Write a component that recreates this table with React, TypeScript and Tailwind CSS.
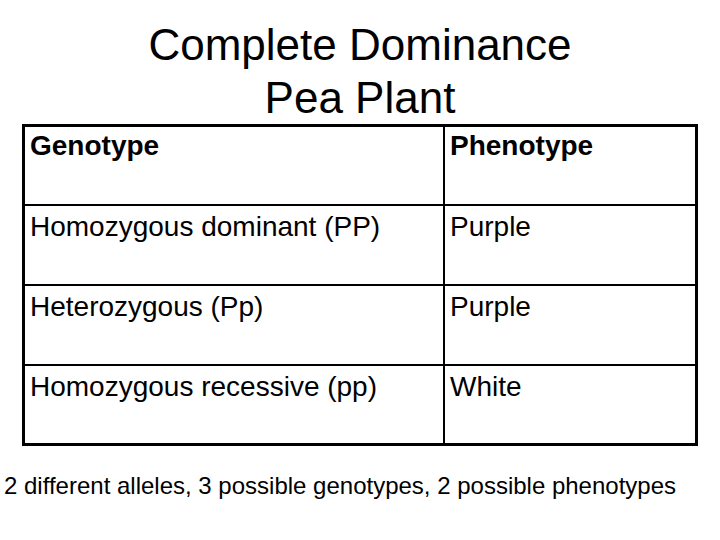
const rows = [
  { genotype: 'Homozygous dominant (PP)', phenotype: 'Purple', h: 'h-[80px] border-b-2' },
  { genotype: 'Heterozygous (Pp)', phenotype: 'Purple', h: 'h-[80px] border-b-2' },
  { genotype: 'Homozygous recessive (pp)', phenotype: 'White', h: 'h-[77px]' },
];

export default function App() {
  return (
    <div className="h-[540px] w-[720px] overflow-hidden bg-white font-['Liberation_Sans',Arial,sans-serif] text-black">
      <h1 className="pt-[18px] text-center text-[44px] leading-[53px] font-normal">
        Complete Dominance
        <br />
        Pea Plant
      </h1>

      <div className="mx-auto w-[676px] border-[3px] border-black">
        <div className="flex h-[79px] border-b-2 border-black text-[28px] font-bold leading-[31px]">
          <div className="w-[420px] border-r-2 border-black px-[5px] pt-[3px]">Genotype</div>
          <div className="flex-1 px-[5px] pt-[3px]">Phenotype</div>
        </div>
        {rows.map((row) => (
          <div key={row.genotype} className={`flex ${row.h} border-black text-[28px] leading-[31px]`}>
            <div className="w-[420px] border-r-2 border-black px-[5px] pt-[5px]">{row.genotype}</div>
            <div className="flex-1 px-[5px] pt-[5px]">{row.phenotype}</div>
          </div>
        ))}
      </div>

      <p className="mt-[26px] pl-[4px] text-[24px] leading-[27px]">
        2 different alleles, 3 possible genotypes, 2 possible phenotypes
      </p>
    </div>
  );
}
